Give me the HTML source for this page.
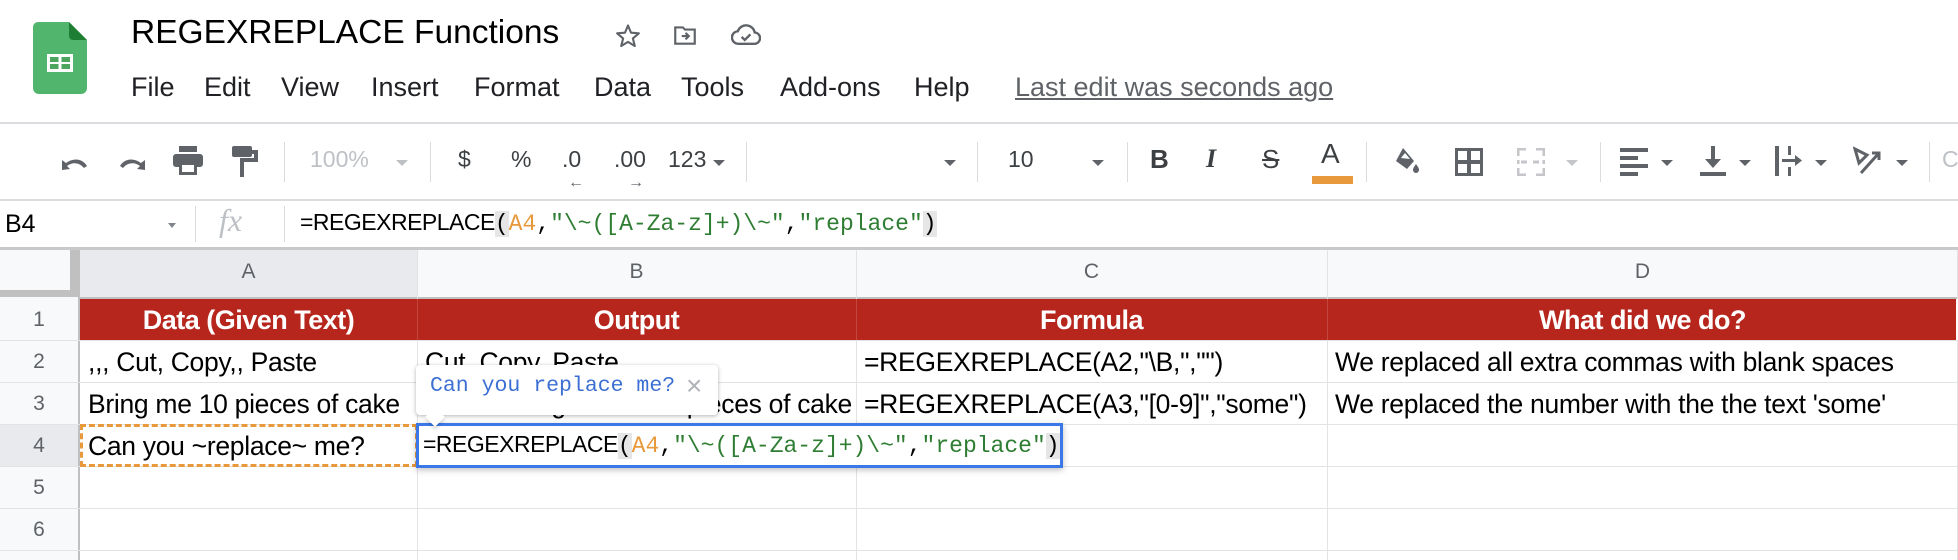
<!DOCTYPE html>
<html><head><meta charset="utf-8"><style>
*{margin:0;padding:0;box-sizing:border-box}
body{width:1958px;height:560px;overflow:hidden;background:#fff;font-family:"Liberation Sans",Arial,sans-serif;position:relative;color:#000}
.a{position:absolute}
.menu span{position:absolute;top:72px;font-size:27px;color:#202124}
.ic{position:absolute;fill:#5f6368}
.sep{position:absolute;top:142px;width:1px;height:40px;background:#dadce0}
.tb{position:absolute;font-size:23px;color:#3c4043;top:146px}
.dd{position:absolute;width:0;height:0;border-left:6px solid transparent;border-right:6px solid transparent;border-top:6px solid #5f6368;top:160px}
.mono{font-family:"Liberation Mono",monospace}
.hl{position:absolute;background:#e2e3e3;height:1px;left:0;width:1958px}
.vl{position:absolute;background:#e2e3e3;width:1px;top:250px;height:310px}
.cell{position:absolute;font-size:26.5px;white-space:nowrap;line-height:42px;padding-left:8px;letter-spacing:-.3px}
.rh{position:absolute;left:0;width:78px;text-align:center;font-size:21px;color:#5f6368;line-height:42px}
.hd{position:absolute;top:300px;height:40px;line-height:40px;text-align:center;color:#fff;font-weight:bold;font-size:27px;letter-spacing:-.5px}
.ch{position:absolute;top:260px;text-align:center;font-size:21px;color:#5f6368}
</style></head><body>
<svg class="a" style="left:33px;top:22px" width="54" height="72" viewBox="0 0 54 72">
<path d="M5 0H36L54 18V66a6 6 0 0 1-6 6H6a6 6 0 0 1-6-6V5a5 5 0 0 1 5-5z" fill="#34a853" opacity=".85"/>
<path d="M36 0L54 18H40a4 4 0 0 1-4-4z" fill="#1e7e34"/>
<rect x="14" y="32" width="26" height="18" fill="#fff"/>
<rect x="17" y="35" width="8.5" height="5" fill="#4ca660"/><rect x="28.5" y="35" width="8.5" height="5" fill="#4ca660"/>
<rect x="17" y="42" width="8.5" height="5" fill="#4ca660"/><rect x="28.5" y="42" width="8.5" height="5" fill="#4ca660"/>
</svg>
<div class="a" style="left:131px;top:14px;font-size:33.5px;color:#000">REGEXREPLACE Functions</div>
<svg class="a" style="left:614px;top:22px" width="28" height="28" viewBox="0 0 24 24"><path d="M12 3l2.6 6.2 6.7.5-5.1 4.4 1.6 6.5L12 17l-5.8 3.6 1.6-6.5L2.7 9.7l6.7-.5z" fill="none" stroke="#5f6368" stroke-width="1.8" stroke-linejoin="round"/></svg>
<svg class="a" style="left:672px;top:22px" width="26" height="26" viewBox="0 0 24 24"><path d="M3 5h7l2 2h9v13H3z" fill="none" stroke="#5f6368" stroke-width="2"/><path d="M9 13h6m-2.5-3l3 3-3 3" fill="none" stroke="#5f6368" stroke-width="2"/></svg>
<svg class="a" style="left:731px;top:22px" width="30" height="26" viewBox="0 0 24 20"><path d="M6 17a5 5 0 0 1-.5-10A7 7 0 0 1 19 8a4.5 4.5 0 0 1-.5 9z" fill="none" stroke="#5f6368" stroke-width="1.9"/><path d="M8.5 11.5l2.5 2.5 4.5-4.5" fill="none" stroke="#5f6368" stroke-width="1.9"/></svg>
<div class="menu">
<span style="left:131px">File</span><span style="left:204px">Edit</span><span style="left:281px">View</span><span style="left:371px">Insert</span><span style="left:474px">Format</span><span style="left:594px">Data</span><span style="left:681px">Tools</span><span style="left:780px">Add-ons</span><span style="left:914px">Help</span>
<span style="left:1015px;color:#5f6368;text-decoration:underline">Last edit was seconds ago</span>
</div>
<div class="a" style="left:0;top:122px;width:1958px;height:2px;background:#dadce0"></div>
<svg class="ic" style="left:58px;top:150px" width="34" height="24" viewBox="0 0 34 24"><path d="M4 10l0 10 8-1-3-3c5-4 12-4 17 2l3-2C24 8 15 8 8 13z"/></svg>
<svg class="ic" style="left:115px;top:150px" width="34" height="24" viewBox="0 0 34 24"><path d="M30 10l0 10-8-1 3-3c-5-4-12-4-17 2l-3-2C10 8 19 8 26 13z"/></svg>
<svg class="ic" style="left:172px;top:146px" width="32" height="30" viewBox="0 0 32 30"><rect x="7" y="0" width="18" height="6"/><rect x="1" y="8" width="30" height="13" rx="3"/><rect x="7" y="16" width="18" height="13"/><rect x="10" y="19" width="12" height="7" fill="#fff"/></svg>
<svg class="ic" style="left:232px;top:146px" width="28" height="32" viewBox="0 0 28 32"><rect x="0" y="0" width="20" height="11" rx="2"/><path d="M20 4h6v12H12v15H8V12h14V8h-2z"/></svg>
<div class="sep" style="left:284px"></div>
<div class="tb" style="left:310px;color:#bdc1c6">100%</div>
<div class="dd" style="left:396px;border-top-color:#bdc1c6"></div>
<div class="sep" style="left:430px"></div>
<div class="tb" style="left:458px">$</div>
<div class="tb" style="left:511px">%</div>
<div class="tb" style="left:562px">.0</div><div class="a" style="left:568px;top:174px;font-size:16px;color:#5f6368;font-weight:bold">&#8592;</div>
<div class="tb" style="left:614px">.00</div><div class="a" style="left:628px;top:174px;font-size:16px;color:#5f6368;font-weight:bold">&#8594;</div>
<div class="tb" style="left:668px">123</div><div class="dd" style="left:713px"></div>
<div class="sep" style="left:746px"></div>
<div class="dd" style="left:944px"></div>
<div class="sep" style="left:977px"></div>
<div class="tb" style="left:1008px">10</div>
<div class="dd" style="left:1092px"></div>
<div class="sep" style="left:1127px"></div>
<div class="tb" style="left:1150px;font-weight:bold;font-size:26px;top:144px">B</div>
<div class="tb" style="left:1206px;font-style:italic;font-weight:bold;font-size:26px;top:144px;font-family:'Liberation Serif',serif">I</div>
<div class="tb" style="left:1262px;font-size:26px;top:144px;text-decoration:line-through">S</div>
<div class="tb" style="left:1321px;font-size:28px;top:138px">A</div>
<div class="a" style="left:1312px;top:176px;width:41px;height:8px;background:#e8993c"></div>
<div class="sep" style="left:1366px"></div>
<svg class="ic" style="left:1394px;top:146px" width="28" height="30" viewBox="0 0 28 30"><path d="M9 2l11 13-7 8L2 15z"/><path d="M7 12l4-5 5 6z" fill="#fff"/><path d="M22 18c2 3 3 4 3 6a3 3 0 0 1-6 0c0-2 1-3 3-6z"/></svg>
<svg class="ic" style="left:1455px;top:148px" width="28" height="28" viewBox="0 0 28 28"><path d="M0 0h28v28H0zM3 3v9h9V3zm13 0v9h9V3zM3 16v9h9v-9zm13 0v9h9v-9z"/></svg>
<svg class="a" style="left:1517px;top:148px" width="28" height="28" viewBox="0 0 28 28" fill="none" stroke="#c4c6c9" stroke-width="3"><path d="M1 8V1h8M19 1h8v7M1 20v7h8M19 27h8v-7M1 12v4M27 12v4M10 14H4m18 0h-6"/></svg>
<div class="dd" style="left:1566px;border-top-color:#c4c6c9"></div>
<div class="sep" style="left:1600px"></div>
<svg class="ic" style="left:1620px;top:148px" width="28" height="28" viewBox="0 0 28 28"><rect y="0" width="28" height="4"/><rect y="8" width="18" height="4"/><rect y="16" width="28" height="4"/><rect y="24" width="18" height="4"/></svg>
<div class="dd" style="left:1661px"></div>
<svg class="ic" style="left:1700px;top:146px" width="26" height="30" viewBox="0 0 26 30"><rect x="11" y="0" width="4" height="16"/><path d="M5 13h16l-8 9z"/><rect x="0" y="26" width="26" height="4"/></svg>
<div class="dd" style="left:1739px"></div>
<svg class="ic" style="left:1775px;top:146px" width="28" height="30" viewBox="0 0 28 30"><rect x="0" y="0" width="4" height="30"/><rect x="13" y="0" width="3" height="9"/><rect x="13" y="21" width="3" height="9"/><rect x="7" y="13" width="14" height="3"/><path d="M20 9l7 5.5-7 5.5z"/></svg>
<div class="dd" style="left:1815px"></div>
<svg class="a" style="left:1853px;top:146px" width="28" height="30" viewBox="0 0 28 30" fill="none" stroke="#5f6368" stroke-width="3"><path d="M2 3l12 6-8 8z"/><path d="M8 27L26 7m-7 0h7v7"/></svg>
<div class="dd" style="left:1896px"></div>
<div class="sep" style="left:1929px"></div>
<div class="tb" style="left:1942px;color:#bdc1c6">C</div>
<div class="a" style="left:0;top:199px;width:1958px;height:2px;background:#dadce0"></div>
<div class="a" style="left:5px;top:210px;font-size:25px;color:#000">B4</div>
<div class="a" style="left:168px;top:223px;width:0;height:0;border-left:4px solid transparent;border-right:4px solid transparent;border-top:5px solid #80868b"></div>
<div class="a" style="left:195px;top:206px;width:1px;height:36px;background:#dadce0"></div>
<div class="a" style="left:219px;top:202px;font-size:32px;font-style:italic;color:#bdc1c6;font-family:'Liberation Serif',serif">fx</div>
<div class="a" style="left:284px;top:206px;width:1px;height:36px;background:#dadce0"></div>
<div class="a" style="left:300px;top:209px;font-size:23px;white-space:nowrap;letter-spacing:-.5px">=REGEXREPLACE<span class="mono" style="font-size:23px;letter-spacing:0"><span style="background:#e6e6e6">(</span><span style="color:#e8993c">A4</span>,<span style="color:#2e7d32">"\~([A-Za-z]+)\~"</span>,<span style="color:#2e7d32">"replace"</span><span style="background:#e6e6e6">)</span></span></div>
<div class="a" style="left:0;top:247px;width:1958px;height:3px;background:#c9c9c9"></div>
<div class="a" style="left:0;top:250px;width:1958px;height:47px;background:#f8f9fa"></div>
<div class="a" style="left:80px;top:250px;width:337px;height:47px;background:#e8eaed"></div>
<div class="a" style="left:0;top:250px;width:78px;height:310px;background:#f8f9fa"></div>
<div class="a" style="left:0;top:425px;width:78px;height:42px;background:#e8eaed"></div>
<div class="a" style="left:70px;top:250px;width:8px;height:47px;background:#c0c0c0"></div>
<div class="a" style="left:0;top:290px;width:78px;height:7px;background:#c0c0c0"></div>
<div class="a" style="left:78px;top:297px;width:1880px;height:2px;background:#c0c0c0"></div>
<div class="a" style="left:78px;top:250px;width:2px;height:310px;background:#c0c0c0"></div>
<div class="hl" style="top:340px"></div><div class="hl" style="top:382px"></div><div class="hl" style="top:424px"></div><div class="hl" style="top:466px"></div><div class="hl" style="top:508px"></div><div class="hl" style="top:550px"></div>
<div class="vl" style="left:417px"></div><div class="vl" style="left:856px"></div><div class="vl" style="left:1327px"></div>
<div class="a" style="left:1957px;top:250px;width:1px;height:310px;background:#e2e3e3"></div>
<div class="ch" style="left:80px;width:337px">A</div>
<div class="ch" style="left:417px;width:439px">B</div>
<div class="ch" style="left:856px;width:471px">C</div>
<div class="ch" style="left:1327px;width:631px">D</div>
<div class="rh" style="top:299px">1</div><div class="rh" style="top:341px">2</div><div class="rh" style="top:383px">3</div><div class="rh" style="top:425px">4</div><div class="rh" style="top:467px">5</div><div class="rh" style="top:509px">6</div>
<div class="a" style="left:80px;top:299px;width:1878px;height:41px;background:#b7261d"></div>
<div class="hd" style="left:80px;width:337px">Data (Given Text)</div>
<div class="hd" style="left:417px;width:439px">Output</div>
<div class="hd" style="left:856px;width:471px">Formula</div>
<div class="hd" style="left:1327px;width:631px">What did we do?</div>
<div class="a" style="left:417px;top:299px;width:1px;height:41px;background:#c5463e"></div>
<div class="a" style="left:856px;top:299px;width:1px;height:41px;background:#c5463e"></div>
<div class="a" style="left:1327px;top:299px;width:1px;height:41px;background:#c5463e"></div>
<div class="a" style="left:1956px;top:299px;width:2px;height:41px;background:#fff"></div>
<div class="cell" style="left:80px;top:341px">,,, Cut, Copy,, Paste</div>
<div class="cell" style="left:417px;top:341px">Cut, Copy, Paste</div>
<div class="cell" style="left:856px;top:341px">=REGEXREPLACE(A2,"\B,","")</div>
<div class="cell" style="left:1327px;top:341px">We replaced all extra commas with blank spaces</div>
<div class="cell" style="left:80px;top:383px;width:337px;overflow:hidden">Bring me 10 pieces of cake</div>
<div class="cell" style="left:418px;top:383px;width:434px;overflow:hidden;text-align:right">Bring me some pieces of cake</div>
<div class="cell" style="left:856px;top:383px">=REGEXREPLACE(A3,"[0-9]","some")</div>
<div class="cell" style="left:1327px;top:383px">We replaced the number with the the text 'some'</div>
<div class="cell" style="left:80px;top:425px">Can you ~replace~ me?</div>
<div class="a" style="left:80px;top:424px;width:338px;height:43px;border:3px dashed #e8993c"></div>
<div class="a" style="left:416px;top:423px;width:647px;height:45px;border:3px solid #3b78e7;background:#fff;box-shadow:0 2px 6px rgba(0,0,0,.25)"></div>
<div class="a" style="left:423px;top:431px;font-size:23px;white-space:nowrap;letter-spacing:-.5px">=REGEXREPLACE<span class="mono" style="font-size:23px;letter-spacing:0"><span style="background:#e6e6e6">(</span><span style="color:#e8993c">A4</span>,<span style="color:#2e7d32">"\~([A-Za-z]+)\~"</span>,<span style="color:#2e7d32">"replace"</span><span style="background:#e6e6e6">)</span></span></div>
<div class="a" style="left:416px;top:365px;width:302px;height:50px;background:#fff;border-radius:4px;box-shadow:0 1px 4px rgba(0,0,0,.3)"></div>
<div class="a" style="left:428px;top:410px;width:14px;height:14px;background:#fff;transform:rotate(45deg);box-shadow:2px 2px 3px rgba(0,0,0,.15)"></div>
<div class="a mono" style="left:430px;top:374px;font-size:21.5px;color:#3b6fd4">Can you replace me?</div>
<div class="a" style="left:686px;top:370px;font-size:28px;color:#b0b4b8">×</div>
</body></html>
